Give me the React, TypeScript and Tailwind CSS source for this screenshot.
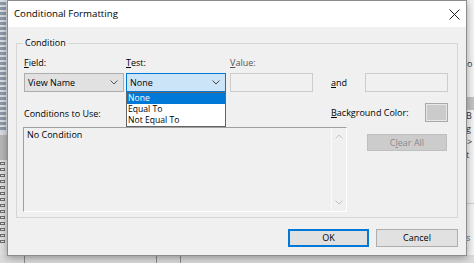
import React from "react";

const font = "font-['Open_Sans','Noto_Sans',sans-serif]";

function Chevron({ className = "" }: { className?: string }) {
  return (
    <svg width="8" height="5" viewBox="0 0 8 5" className={className}>
      <path d="M0.5 0.5 L4 4 L7.5 0.5" fill="none" stroke="currentColor" strokeWidth="1" />
    </svg>
  );
}

function Key({ children }: { children: React.ReactNode }) {
  return <span className="underline underline-offset-[1px]">{children}</span>;
}

function BackdropLeft() {
  // striped icons of the app behind the dialog
  const rows = Array.from({ length: 26 });
  return (
    <div className="flex flex-col w-[7px] h-full bg-[#d9dde2]">
      <div className="flex flex-col gap-[2px] pt-[2px] h-[135px] overflow-hidden">
        {rows.map((_, i) => (
          <div key={i} className="h-[3px] w-[6px] bg-[#8d9aa8]" />
        ))}
      </div>
      <div className="h-[25px] bg-[#b8b8b8]" />
      <div className="flex flex-col gap-[3px] pt-[2px] flex-1 bg-[#e2e2e2] overflow-hidden">
        {rows.slice(0, 14).map((_, i) => (
          <div key={i} className="h-[3px] w-[5px] border border-[#6f6f6f]" />
        ))}
      </div>
    </div>
  );
}

function BackdropRight() {
  return (
    <div className={`flex flex-col w-[8px] h-full bg-[#f4f4f4] text-[9px] leading-[12px] text-[#333] overflow-hidden whitespace-nowrap ${font}`}>
      <div className="h-[58px]" />
      <div className="h-[13px] pl-[1px]">o</div>
      <div className="h-[26px]" />
      <div className="h-[13px] bg-[#c4c4c4]" />
      <div className="h-[13px]">B</div>
      <div className="h-[13px]">g</div>
      <div className="h-[13px] pl-[1px]">&gt;</div>
      <div className="h-[13px]">t</div>
      <div className="h-[42px] border-b border-[#cfcfcf]" />
      <div className="h-[28px]" />
      <div className="h-[13px] text-[#2a6ebb]">s</div>
    </div>
  );
}

export default function App() {
  return (
    <div className="relative w-[474px] h-[263px] overflow-hidden bg-[#e6e6e6] flex">
      <BackdropLeft />
      <div className="flex-1" />
      <BackdropRight />
      <div className="absolute left-0 right-0 bottom-0 h-[8px] bg-[#dcdcdc] flex">
        <div className="w-[25px] border-r border-[#8a8a8a]" />
        <div className="w-[132px] border-r border-[#8a8a8a]" />
        <div className="w-[24px] border-r border-[#8a8a8a]" />
      </div>

      {/* dialog window */}
      <div
        className={`absolute left-[7px] top-0 w-[460px] h-[256px] flex flex-col bg-[#f0f0f0] border border-[#8c8c8c] shadow-[0_2px_8px_rgba(0,0,0,0.35)] text-[9px] leading-[12px] text-black ${font}`}
      >
        {/* title bar */}
        <div className="h-[26px] bg-white flex items-center justify-between pl-[6px] pr-[6px]">
          <span className="text-[9.7px] text-black">Conditional Formatting</span>
          <svg width="11" height="11" viewBox="0 0 11 11">
            <path d="M0.5 0.5 L10.5 10.5 M10.5 0.5 L0.5 10.5" stroke="#222" strokeWidth="1" />
          </svg>
        </div>

        <div className="flex-1 flex flex-col px-[8px] pt-[16px]">
          {/* group box */}
          <div className="relative h-[175px] border border-[#d6d6d6] flex flex-col px-[7px] pt-[13px]">
            <span className="absolute -top-[7px] left-[6px] px-[2px] bg-[#f0f0f0]">Condition</span>

            <div className="flex items-end">
              <div className="flex flex-col w-[100px]">
                <span className="h-[12px] mb-[4px]">
                  <Key>F</Key>ield:
                </span>
                <div className="h-[19px] bg-[#e1e1e1] border border-[#adadad] flex items-center justify-between pl-[3px] pr-[5px]">
                  <span>View Name</span>
                  <Chevron className="text-[#555]" />
                </div>
              </div>
              <div className="relative flex flex-col w-[100px] ml-[2px]">
                <span className="h-[12px] mb-[4px]">
                  <Key>T</Key>est:
                </span>
                <div className="h-[19px] bg-[#cce4f7] border border-[#0078d7] flex items-center justify-between pl-[3px] pr-[5px]">
                  <span>None</span>
                  <Chevron className="text-[#444]" />
                </div>
                {/* open dropdown list */}
                <div className="absolute top-full left-0 w-[100px] bg-white border border-[#646464] flex flex-col z-10 text-[8.6px]">
                  <div className="h-[11px] leading-[11px] pl-[1px] bg-[#0078d7] text-white">None</div>
                  <div className="h-[11px] leading-[11px] pl-[1px]">Equal To</div>
                  <div className="h-[11px] leading-[11px] pl-[1px]">Not Equal To</div>
                </div>
              </div>
              <div className="flex flex-col w-[83px] ml-[4px]">
                <span className="h-[12px] mb-[4px] text-[#555]">
                  <Key>V</Key>alue:
                </span>
                <div className="h-[19px] bg-[#f0f0f0] border border-[#cccccc]" />
              </div>
              <span className="h-[19px] flex items-center ml-[18px] w-[34px]">
                <Key>a</Key>nd
              </span>
              <div className="h-[19px] w-[83px] bg-[#f0f0f0] border border-[#cccccc]" />
            </div>

            <div className="flex items-center h-[19px] mt-[11px]">
              <span className="w-[307px] mt-[2px]">Conditions to Use:</span>
              <span className="w-[94px]">
                <Key>B</Key>ackground Color:
              </span>
              <div className="w-[23px] h-[19px] bg-[#cbcbcb] border border-[#a9a9a9] shadow-[inset_0_0_0_1px_#e8e8e8]" />
            </div>

            <div className="flex mt-[5px]">
              <div className="w-[324px] h-[85px] border-t border-l border-[#a0a0a0] border-b border-r border-b-white border-r-white flex -ml-[1px]">
                <div className="flex-1 pl-[3px] pt-[1px]">No Condition</div>
                <div className="w-[15px] border-l border-[#fafafa] flex flex-col items-center justify-between pt-[6px] pb-[6px] text-[#c2c2c2]">
                  <Chevron className="rotate-180" />
                  <Chevron />
                </div>
              </div>
              <div className="ml-[20px] mt-[7px] w-[80px] h-[17px] bg-[#cccccc] border border-[#bfbfbf] flex items-center justify-center text-[#8a8a8a]">
                C<Key>l</Key>ear All
              </div>
            </div>
          </div>

          {/* footer buttons */}
          <div className="flex justify-end gap-[7px] mt-[11px]">
            <div className="w-[81px] h-[18px] bg-[#e1e1e1] border-2 border-[#0078d7] flex items-center justify-center">OK</div>
            <div className="w-[82px] h-[18px] bg-[#e1e1e1] border border-[#adadad] flex items-center justify-center">Cancel</div>
          </div>
        </div>
      </div>
    </div>
  );
}
